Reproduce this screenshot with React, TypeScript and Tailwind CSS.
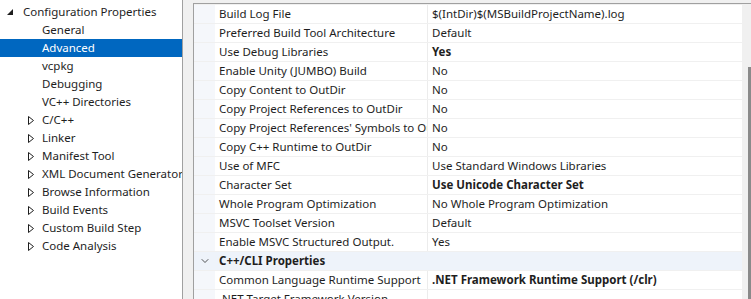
import React from "react";
import { ChevronDown } from "lucide-react";

type Prop = { name: string; value: string; bold?: boolean };

const treeItems: { label: string; depth: number; kind: "open" | "closed" | "leaf"; selected?: boolean }[] = [
  { label: "Configuration Properties", depth: 0, kind: "open" },
  { label: "General", depth: 1, kind: "leaf" },
  { label: "Advanced", depth: 1, kind: "leaf", selected: true },
  { label: "vcpkg", depth: 1, kind: "leaf" },
  { label: "Debugging", depth: 1, kind: "leaf" },
  { label: "VC++ Directories", depth: 1, kind: "leaf" },
  { label: "C/C++", depth: 1, kind: "closed" },
  { label: "Linker", depth: 1, kind: "closed" },
  { label: "Manifest Tool", depth: 1, kind: "closed" },
  { label: "XML Document Generator", depth: 1, kind: "closed" },
  { label: "Browse Information", depth: 1, kind: "closed" },
  { label: "Build Events", depth: 1, kind: "closed" },
  { label: "Custom Build Step", depth: 1, kind: "closed" },
  { label: "Code Analysis", depth: 1, kind: "closed" },
];

const advanced: Prop[] = [
  { name: "Build Log File", value: "$(IntDir)$(MSBuildProjectName).log" },
  { name: "Preferred Build Tool Architecture", value: "Default" },
  { name: "Use Debug Libraries", value: "Yes", bold: true },
  { name: "Enable Unity (JUMBO) Build", value: "No" },
  { name: "Copy Content to OutDir", value: "No" },
  { name: "Copy Project References to OutDir", value: "No" },
  { name: "Copy Project References' Symbols to OutDir", value: "No" },
  { name: "Copy C++ Runtime to OutDir", value: "No" },
  { name: "Use of MFC", value: "Use Standard Windows Libraries" },
  { name: "Character Set", value: "Use Unicode Character Set", bold: true },
  { name: "Whole Program Optimization", value: "No Whole Program Optimization" },
  { name: "MSVC Toolset Version", value: "Default" },
  { name: "Enable MSVC Structured Output.", value: "Yes" },
];

const cli: Prop[] = [
  { name: "Common Language Runtime Support", value: ".NET Framework Runtime Support (/clr)", bold: true },
  { name: ".NET Target Framework Version", value: "" },
];

function Triangle({ open }: { open: boolean }) {
  if (open) {
    return (
      <svg width="8" height="8" viewBox="0 0 8 8">
        <path d="M7 1 L7 7 L1 7 Z" fill="#1e1e1e" />
      </svg>
    );
  }
  return (
    <svg width="6" height="9" viewBox="0 0 6 9">
      <path d="M0.5 0.5 L5.5 4.5 L0.5 8.5 Z" fill="none" stroke="#1e1e1e" strokeWidth="1" />
    </svg>
  );
}

function PropRow({ p }: { p: Prop }) {
  return (
    <div className="flex h-[19px] border-b border-[#f0f0f0]">
      <div className="w-[21px] shrink-0 bg-[#f5f7fb]" />
      <div className="w-[213px] shrink-0 pl-[4px] overflow-hidden whitespace-nowrap bg-white border-r border-[#ececec] leading-[18px]">
        {p.name}
      </div>
      <div className={`flex-1 pl-[4px] overflow-hidden whitespace-nowrap bg-white leading-[18px] ${p.bold ? "font-bold" : ""}`}>
        {p.value}
      </div>
    </div>
  );
}

export default function App() {
  return (
    <div
      className="flex h-[299px] w-[751px] overflow-hidden bg-[#f0f0f0] text-[11.5px] text-[#1e1e1e]"
      style={{ fontFamily: '"Noto Sans", "Open Sans", sans-serif' }}
    >
      {/* Tree */}
      <div className="w-[183px] shrink-0 overflow-hidden bg-white border-r border-[#a0a0a0] pt-[3px]">
        {treeItems.map((t) => (
          <div
            key={t.label}
            className={`flex items-center h-[18px] whitespace-nowrap ${t.selected ? "bg-[#0067c0] text-white" : ""}`}
          >
            <div className={`${t.depth === 0 ? "w-[23px] pl-[6px]" : "w-[42px] pl-[28px]"} shrink-0 flex items-center`}>
              {t.kind !== "leaf" && <Triangle open={t.kind === "open"} />}
            </div>
            <span>{t.label}</span>
          </div>
        ))}
      </div>

      {/* Property grid */}
      <div className="flex-1 pl-[10px] pt-[3px]">
        <div className="flex h-full border-t border-l border-[#a0a0a0]">
          <div className="flex-1 pt-[1px]">
            {advanced.map((p) => (
              <PropRow key={p.name} p={p} />
            ))}
            <div className="flex items-center h-[19px] border-b border-[#f0f0f0] bg-[#eef3fa] font-bold">
              <div className="w-[21px] shrink-0 flex justify-center">
                <ChevronDown size={12} strokeWidth={1.5} />
              </div>
              <span className="pl-[4px]">C++/CLI Properties</span>
            </div>
            {cli.map((p) => (
              <PropRow key={p.name} p={p} />
            ))}
          </div>
          <div className="w-[9px] shrink-0 bg-[#f0f0f0] flex justify-end pt-[63px]">
            <div className="w-[3px] h-full bg-[#8a8a8a]" />
          </div>
        </div>
      </div>
    </div>
  );
}
